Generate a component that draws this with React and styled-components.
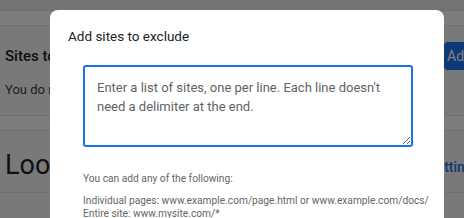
import React from "react";
import styled, { createGlobalStyle } from "styled-components";

const GlobalStyle = createGlobalStyle`
  html, body {
    margin: 0;
    padding: 0;
    width: 464px;
    height: 218px;
    overflow: hidden;
    font-family: Roboto, "Noto Sans", Arial, sans-serif;
    background: #f3f3f3;
  }
`;

const Page = styled.div`
  position: relative;
  width: 464px;
  height: 218px;
  overflow: hidden;
`;

const Backdrop = styled.div`
  display: flex;
  flex-direction: column;
  padding-left: 5px;
  color: #202124;
`;

const TopCard = styled.div`
  height: 10px;
  margin-left: -5px;
  background: #e8e8e8;
  border-bottom: 1px solid #dadce0;
`;

const Strip = styled.div`
  height: 14px;
  margin-left: -5px;
  border-bottom: 1px solid #e0e0e0;
  background: #fafafa;
`;

const SectionHead = styled.div`
  display: flex;
  align-items: center;
  justify-content: space-between;
  height: 28px;
  margin-top: 16px;
`;

const SectionTitle = styled.h3`
  margin: 0;
  font-size: 15px;
  font-weight: 500;
`;

const AddButton = styled.button`
  border: none;
  background: #1a73e8;
  color: #fff;
  font-family: inherit;
  font-size: 14px;
  height: 28px;
  width: 40px;
  margin-right: -20px;
  padding: 0 0 0 3px;
  text-align: left;
  border-radius: 4px;
`;

const SectionText = styled.p`
  margin: 11px 0 0;
  font-size: 13px;
  line-height: 18px;
  color: #3c4043;
`;

const Rule = styled.div`
  margin-left: -5px;
  height: ${(p) => p.$h}px;
  border-bottom: 1px solid #e0e0e0;
  background: ${(p) => p.$bg || "transparent"};
`;

const BigHead = styled.div`
  display: flex;
  align-items: center;
  justify-content: space-between;
  box-sizing: border-box;
  height: 62px;
  margin-left: -5px;
  padding: 7px 0 0 5px;
  border-bottom: 1px solid #e0e0e0;
`;

const BigTitle = styled.h2`
  margin: 0;
  font-size: 27px;
  font-weight: 400;
  color: #202124;
`;

const LinkText = styled.span`
  font-size: 14px;
  font-weight: 500;
  color: #1a73e8;
  margin-right: -16px;
  padding-top: 4px;
`;

const Overlay = styled.div`
  position: absolute;
  inset: 0;
  background: rgba(0, 0, 0, 0.5);
`;

const Dialog = styled.div`
  position: absolute;
  left: 50px;
  top: 10px;
  width: 394px;
  height: 260px;
  background: #fff;
  border-radius: 8px;
  box-sizing: border-box;
  padding: 16px 0 0 18px;
  display: flex;
  flex-direction: column;
`;

const DialogTitle = styled.h1`
  margin: 0;
  font-size: 13.5px;
  line-height: 20px;
  font-weight: 400;
  color: #202124;
`;

const Body = styled.div`
  margin-top: 19px;
  padding-left: 15px;
  display: flex;
  flex-direction: column;
`;

const SitesInput = styled.textarea`
  box-sizing: border-box;
  width: 330px;
  height: 82px;
  margin: 0;
  padding: 11px 12px;
  border: 2px solid #1a73e8;
  border-radius: 3px;
  outline: none;
  font-family: Roboto, "Noto Sans", Arial, sans-serif;
  font-size: 13px;
  line-height: 19px;
  color: #5f6368;
  resize: vertical;

  &::placeholder {
    color: #5f6368;
    opacity: 1;
  }
`;

const Help = styled.div`
  margin-top: 25px;
  font-size: 10.2px;
  line-height: 13px;
  color: #666;
  white-space: nowrap;
`;

const HelpLine = styled.div`
  margin-top: ${(p) => p.$gap || 0}px;
`;

export default function App() {
  return (
    <Page>
      <GlobalStyle />
      <Backdrop>
        <TopCard />
        <Strip />
        <SectionHead>
          <SectionTitle>Sites to exclude</SectionTitle>
          <AddButton>Add</AddButton>
        </SectionHead>
        <SectionText>You do not have any sites excluded.</SectionText>
        <Rule $h={16} />
        <Rule $h={14} $bg="#fafafa" />
        <BigHead>
          <BigTitle>Looker Studio</BigTitle>
          <LinkText>Settings</LinkText>
        </BigHead>
      </Backdrop>
      <Overlay />
      <Dialog>
        <DialogTitle>Add sites to exclude</DialogTitle>
        <Body>
          <SitesInput
            placeholder="Enter a list of sites, one per line. Each line doesn't need a delimiter at the end."
          />
          <Help>
            <HelpLine>You can add any of the following:</HelpLine>
            <HelpLine $gap={9}>
              Individual pages: www.example.com/page.html or www.example.com/docs/
            </HelpLine>
            <HelpLine>Entire site: www.mysite.com/*</HelpLine>
          </Help>
        </Body>
      </Dialog>
    </Page>
  );
}
